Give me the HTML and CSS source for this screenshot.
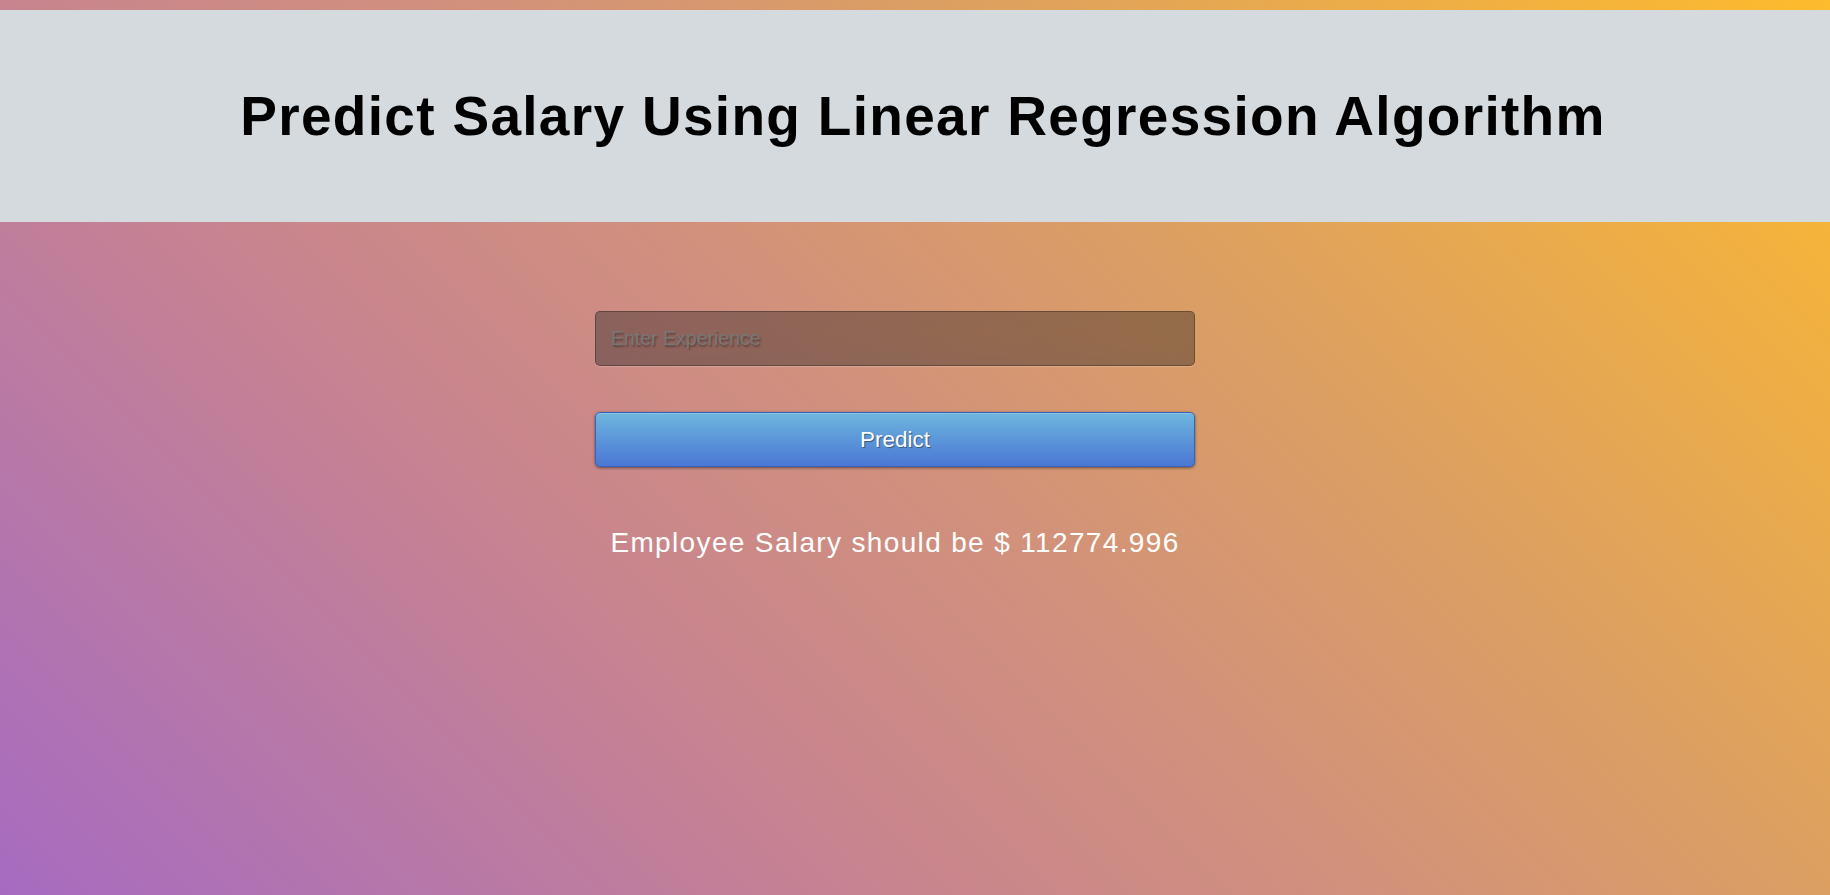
FILE: index.html
```html
<!DOCTYPE html>
<html lang="en">
<head>
<meta charset="UTF-8">
<meta name="viewport" content="width=device-width, initial-scale=1.0">
<title>Salary Prediction</title>
<link rel="stylesheet" href="styles.css">
</head>
<body>
  <header class="banner">
    <h1>Predict Salary Using Linear Regression Algorithm</h1>
  </header>

  <div class="login">
    <form class="predict-form" action="/predict" method="post">
      <input type="text" name="experience" placeholder="Enter Experience" required>
      <button type="submit" class="btn btn-primary btn-block btn-large">Predict</button>
    </form>

    <div class="result">Employee Salary should be $ 112774.996</div>
  </div>
</body>
</html>
```

FILE: styles.css
```css
html {
    height: 100%;
}

body {
    margin: 0;
    min-height: 100%;
    font-family: "Liberation Sans", Arial, sans-serif;
    background: linear-gradient(45deg, #a66bc1 0%, #c8848f 33%, #d1917c 50%, #dc9f62 67%, #fdbb2d 100%);
    background-attachment: fixed;
}

.banner {
    margin-top: 10px;
    height: 212px;
    background-color: #d5dade;
    display: flex;
    align-items: center;
    justify-content: center;
    padding-left: 16px;
}

.banner h1 {
    margin: 0;
    font-size: 55px;
    font-weight: bold;
    letter-spacing: 1.3px;
    color: #000;
}

.login {
    width: 600px;
    margin-top: 89px;
    margin-left: calc(50% - 320px);
}

.predict-form {
    display: flex;
    flex-direction: column;
    gap: 46px;
}

.predict-form input {
    box-sizing: border-box;
    width: 100%;
    height: 55px;
    padding: 0 15px;
    font-family: inherit;
    font-size: 19.5px;
    color: #fff;
    background: rgba(0, 0, 0, 0.3);
    border: 1px solid rgba(0, 0, 0, 0.3);
    border-radius: 5px;
    outline: none;
    text-shadow: 1px 1px 1px rgba(0, 0, 0, 0.3);
    box-shadow: inset 0 -5px 45px rgba(100, 100, 100, 0.2), 0 1px 1px rgba(255, 255, 255, 0.2);
}

.predict-form input::placeholder {
    color: #777;
    text-shadow: 1px 2px 2px rgba(0, 0, 0, 0.35);
}

.btn {
    box-sizing: border-box;
    width: 100%;
    height: 55px;
    padding-bottom: 1px;
    font-family: inherit;
    font-size: 22.5px;
    color: #fff;
    cursor: pointer;
    border-radius: 5px;
}

.btn-primary {
    background-image: linear-gradient(to bottom, #6eb6de, #4a77d4);
    border: 1px solid #3762bc;
    text-shadow: 1px 1px 1px rgba(0, 0, 0, 0.4);
    box-shadow: inset 0 1px 0 rgba(255, 255, 255, 0.2), 0 1px 3px rgba(0, 0, 0, 0.5);
}

.btn-primary:hover {
    background-color: #4a77d4;
}

.result {
    margin-top: 60px;
    text-align: center;
    font-size: 28px;
    letter-spacing: 1.35px;
    color: #fff;
}
```
